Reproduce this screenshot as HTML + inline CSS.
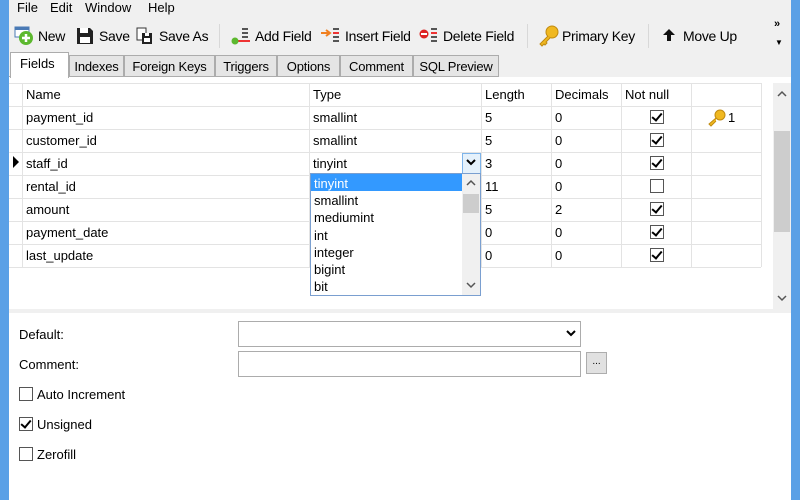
<!DOCTYPE html>
<html><head><meta charset="utf-8"><style>
*{box-sizing:border-box;margin:0;padding:0}
body{width:800px;height:500px;overflow:hidden;background:#f0f0f0;font-family:"Liberation Sans",sans-serif;font-size:13px;color:#000;position:relative}
.a{position:absolute;white-space:nowrap}
.t{font-size:14px;letter-spacing:-0.3px}
.tab{position:absolute;top:55px;height:22px;border:1px solid #acacac;background:#e5e5e5;padding:3px 0 0 0;text-align:center;font-size:13px;letter-spacing:-0.2px}
.cb{position:absolute;width:14px;height:14px;border:1px solid #555;background:#fff}
.chk::after{content:"";position:absolute;left:3px;top:0px;width:4px;height:8px;border:solid #000;border-width:0 2px 2px 0;transform:rotate(40deg)}
.hl{position:absolute;left:9px;width:752px;height:1px;background:#e3e3e3}
.vl{position:absolute;top:83px;width:1px;height:184px;background:#e3e3e3}
</style></head><body>
<div class="a" style="left:0;top:0;width:9px;height:500px;background:#5aa0e6"></div>
<div class="a" style="left:791px;top:0;width:9px;height:500px;background:#5aa0e6"></div>
<div class="a" style="left:17px;top:0">File</div>
<div class="a" style="left:50px;top:0">Edit</div>
<div class="a" style="left:85px;top:0">Window</div>
<div class="a" style="left:148px;top:0">Help</div>
<svg class="a" style="left:14px;top:26px" width="22" height="20"><rect x="1" y="1" width="14" height="10" fill="#fff" stroke="#4a7ab5"/><rect x="1" y="1" width="14" height="3" fill="#4a7ab5"/><circle cx="12" cy="12" r="7" fill="#5cb82e"/><path d="M12 8v8M8 12h8" stroke="#fff" stroke-width="2.5"/></svg>
<div class="a t" style="left:38px;top:28px">New</div>
<svg class="a" style="left:76px;top:27px" width="18" height="18"><path d="M1 1h13l3 3v13H1z" fill="#222"/><rect x="4" y="1" width="8" height="5" fill="#fff"/><rect x="4" y="10" width="10" height="6" fill="#fff"/></svg>
<div class="a t" style="left:99px;top:28px">Save</div>
<svg class="a" style="left:136px;top:27px" width="18" height="18"><rect x="1" y="1" width="9" height="12" fill="#fff" stroke="#333"/><path d="M6 6h10v11H6z" fill="#222"/><rect x="9" y="6" width="4" height="3" fill="#fff"/><rect x="8" y="11" width="6" height="4" fill="#fff"/></svg>
<div class="a t" style="left:159px;top:28px">Save As</div>
<div class="a" style="left:219px;top:24px;width:1px;height:24px;background:#d8d8d8"></div>
<svg class="a" style="left:230px;top:26px" width="22" height="20"><rect x="12" y="2" width="6" height="2" fill="#555"/><rect x="12" y="6" width="6" height="2" fill="#555"/><rect x="12" y="10" width="6" height="2" fill="#555"/><rect x="8" y="14" width="12" height="2" fill="#e33"/><circle cx="5" cy="15" r="3.5" fill="#5cb82e"/></svg>
<div class="a t" style="left:255px;top:28px">Add Field</div>
<svg class="a" style="left:320px;top:26px" width="22" height="20"><rect x="13" y="2" width="6" height="2" fill="#555"/><rect x="13" y="6" width="6" height="2" fill="#e33"/><rect x="13" y="10" width="6" height="2" fill="#555"/><rect x="13" y="14" width="6" height="2" fill="#555"/><path d="M1 7h8M6 4l4 3-4 3" stroke="#f08020" stroke-width="2" fill="none"/></svg>
<div class="a t" style="left:345px;top:28px">Insert Field</div>
<svg class="a" style="left:418px;top:26px" width="22" height="20"><rect x="13" y="2" width="6" height="2" fill="#555"/><rect x="13" y="6" width="6" height="2" fill="#e33"/><rect x="13" y="10" width="6" height="2" fill="#555"/><rect x="13" y="14" width="6" height="2" fill="#555"/><circle cx="6" cy="8" r="4.5" fill="#d22"/><rect x="3" y="7" width="6" height="2" fill="#fff"/></svg>
<div class="a t" style="left:443px;top:28px">Delete Field</div>
<div class="a" style="left:527px;top:24px;width:1px;height:24px;background:#d8d8d8"></div>
<svg class="a" style="left:538px;top:25px" width="22" height="22"><circle cx="14" cy="7" r="6" fill="#f0b820" stroke="#c08a10"/><path d="M10 11L2 19l2 2 2-2 1 1 2-2-1-1 4-4" fill="#f0b820" stroke="#c08a10"/></svg>
<div class="a t" style="left:562px;top:28px">Primary Key</div>
<div class="a" style="left:648px;top:24px;width:1px;height:24px;background:#d8d8d8"></div>
<svg class="a" style="left:661px;top:27px" width="16" height="16"><path d="M8 2L2 8h4v6h4V8h4z" fill="#111"/></svg>
<div class="a t" style="left:683px;top:28px">Move Up</div>
<div class="a" style="left:774px;top:18px;font-size:11px;font-weight:bold">»</div>
<div class="a" style="left:775px;top:38px;font-size:8px">▼</div>
<div class="a" style="left:9px;top:77px;width:782px;height:423px;background:#fff"></div>
<div class="a" style="left:9px;top:76px;width:490px;height:1px;background:#acacac"></div>
<div class="tab" style="left:69px;width:55px">Indexes</div>
<div class="tab" style="left:124px;width:91px">Foreign Keys</div>
<div class="tab" style="left:215px;width:62px">Triggers</div>
<div class="tab" style="left:277px;width:63px">Options</div>
<div class="tab" style="left:340px;width:73px">Comment</div>
<div class="tab" style="left:413px;width:86px">SQL Preview</div>
<div class="a" style="left:10px;top:52px;width:59px;height:26px;background:#fff;border:1px solid #acacac;border-bottom:none;padding:3px 0 0 9px">Fields</div>
<div class="a" style="left:9px;top:83px;width:763px;height:227px;background:#fff"></div>
<div class="hl" style="top:83px"></div>
<div class="hl" style="top:106px"></div><div class="hl" style="top:129px"></div><div class="hl" style="top:152px"></div><div class="hl" style="top:175px"></div><div class="hl" style="top:198px"></div><div class="hl" style="top:221px"></div><div class="hl" style="top:244px"></div><div class="hl" style="top:267px"></div>
<div class="vl" style="left:22px"></div><div class="vl" style="left:309px"></div><div class="vl" style="left:481px"></div><div class="vl" style="left:551px"></div><div class="vl" style="left:621px"></div><div class="vl" style="left:691px"></div><div class="vl" style="left:761px"></div>
<div class="a" style="left:26px;top:87px">Name</div><div class="a" style="left:313px;top:87px">Type</div><div class="a" style="left:485px;top:87px">Length</div><div class="a" style="left:555px;top:87px">Decimals</div><div class="a" style="left:625px;top:87px">Not null</div>
<div class="a" style="left:26px;top:110px">payment_id</div><div class="a" style="left:313px;top:110px">smallint</div><div class="a" style="left:485px;top:110px">5</div><div class="a" style="left:555px;top:110px">0</div>
<div class="a" style="left:26px;top:133px">customer_id</div><div class="a" style="left:313px;top:133px">smallint</div><div class="a" style="left:485px;top:133px">5</div><div class="a" style="left:555px;top:133px">0</div>
<svg class="a" style="left:12px;top:156px" width="8" height="12"><path d="M1 0l6 6-6 6z" fill="#000"/></svg>
<div class="a" style="left:26px;top:156px">staff_id</div><div class="a" style="left:485px;top:156px">3</div><div class="a" style="left:555px;top:156px">0</div>
<div class="a" style="left:26px;top:179px">rental_id</div><div class="a" style="left:485px;top:179px">11</div><div class="a" style="left:555px;top:179px">0</div>
<div class="a" style="left:26px;top:202px">amount</div><div class="a" style="left:485px;top:202px">5</div><div class="a" style="left:555px;top:202px">2</div>
<div class="a" style="left:26px;top:225px">payment_date</div><div class="a" style="left:485px;top:225px">0</div><div class="a" style="left:555px;top:225px">0</div>
<div class="a" style="left:26px;top:248px">last_update</div><div class="a" style="left:485px;top:248px">0</div><div class="a" style="left:555px;top:248px">0</div>
<div class="cb chk" style="left:650px;top:110px"></div><div class="cb chk" style="left:650px;top:133px"></div><div class="cb chk" style="left:650px;top:156px"></div><div class="cb" style="left:650px;top:179px"></div><div class="cb chk" style="left:650px;top:202px"></div><div class="cb chk" style="left:650px;top:225px"></div><div class="cb chk" style="left:650px;top:248px"></div>
<svg class="a" style="left:707px;top:109px" width="20" height="18"><circle cx="13" cy="6" r="5" fill="#f0b820" stroke="#c08a10"/><path d="M9 9L2 15l2 2 5-5" fill="#f0b820" stroke="#c08a10"/></svg>
<div class="a" style="left:728px;top:110px">1</div>
<div class="a" style="left:310px;top:153px;width:171px;height:21px;background:#fff"></div>
<div class="a" style="left:313px;top:156px">tinyint</div>
<div class="a" style="left:462px;top:153px;width:19px;height:21px;background:#e5f1fb;border:1px solid #7eb4ea"></div>
<svg class="a" style="left:466px;top:159px" width="10" height="8"><path d="M1 1l4 4 4-4" stroke="#000" stroke-width="2" fill="none"/></svg>
<div class="a" style="left:310px;top:173px;width:171px;height:123px;background:#fff;border:1px solid #7a9fd0"></div>
<div class="a" style="left:311px;top:174px;width:151px;height:17px;background:#3399ff"></div>
<div class="a" style="left:314px;top:176px;color:#fff">tinyint</div>
<div class="a" style="left:314px;top:193px">smallint</div>
<div class="a" style="left:314px;top:210px">mediumint</div>
<div class="a" style="left:314px;top:228px">int</div>
<div class="a" style="left:314px;top:245px">integer</div>
<div class="a" style="left:314px;top:262px">bigint</div>
<div class="a" style="left:314px;top:279px">bit</div>
<div class="a" style="left:462px;top:174px;width:18px;height:121px;background:#f0f0f0"></div>
<div class="a" style="left:463px;top:194px;width:16px;height:19px;background:#cdcdcd"></div>
<svg class="a" style="left:466px;top:179px" width="10" height="8"><path d="M1 6l4-4 4 4" stroke="#555" stroke-width="1.5" fill="none"/></svg>
<svg class="a" style="left:466px;top:281px" width="10" height="8"><path d="M1 2l4 4 4-4" stroke="#555" stroke-width="1.5" fill="none"/></svg>
<div class="a" style="left:773px;top:83px;width:18px;height:227px;background:#f0f0f0"></div>
<div class="a" style="left:774px;top:131px;width:16px;height:101px;background:#cdcdcd"></div>
<svg class="a" style="left:777px;top:90px" width="10" height="8"><path d="M1 6l4-4 4 4" stroke="#555" stroke-width="1.5" fill="none"/></svg>
<svg class="a" style="left:777px;top:294px" width="10" height="8"><path d="M1 2l4 4 4-4" stroke="#555" stroke-width="1.5" fill="none"/></svg>
<div class="a" style="left:9px;top:309px;width:782px;height:4px;background:#f0f0f0"></div>
<div class="a" style="left:19px;top:327px">Default:</div>
<div class="a" style="left:238px;top:321px;width:343px;height:26px;border:1px solid #acacac;background:#fff"></div>
<svg class="a" style="left:566px;top:330px" width="10" height="8"><path d="M1 1l4 4 4-4" stroke="#000" stroke-width="2" fill="none"/></svg>
<div class="a" style="left:19px;top:357px">Comment:</div>
<div class="a" style="left:238px;top:351px;width:343px;height:26px;border:1px solid #acacac;background:#fff"></div>
<div class="a" style="left:586px;top:352px;width:21px;height:22px;border:1px solid #adadad;background:#e1e1e1;font-size:10px;text-align:center;line-height:18px">...</div>
<div class="cb" style="left:19px;top:387px"></div><div class="a" style="left:37px;top:387px">Auto Increment</div>
<div class="cb chk" style="left:19px;top:417px"></div><div class="a" style="left:37px;top:417px">Unsigned</div>
<div class="cb" style="left:19px;top:447px"></div><div class="a" style="left:37px;top:447px">Zerofill</div>
</body></html>
